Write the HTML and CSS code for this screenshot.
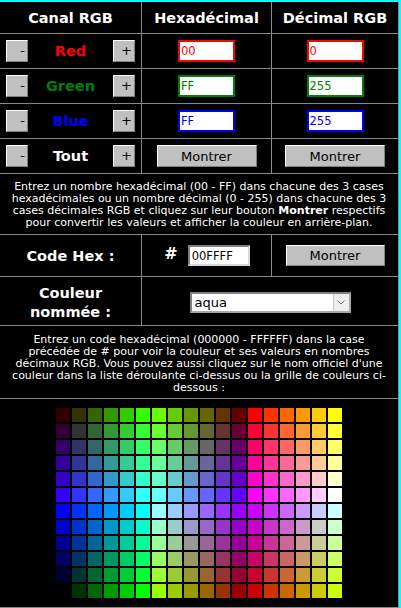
FILE: index.html
```html
<!DOCTYPE html>
<html lang="fr">
<head>
<meta charset="utf-8">
<title>Canal RGB</title>
<link rel="stylesheet" href="styles.css">
</head>
<body>
<div class="page">
  <div class="row head">
    <div class="cell sep">Canal RGB</div>
    <div class="cell sep">Hexadécimal</div>
    <div class="cell">Décimal RGB</div>
  </div>

  <div class="row chan">
    <div class="cell sep ctrl"><button class="step">-</button><span class="lbl red">Red</span><button class="step">+</button></div>
    <div class="cell sep"><input class="box red-b" type="text" value="00"></div>
    <div class="cell"><input class="box red-b" type="text" value="0"></div>
  </div>

  <div class="row chan">
    <div class="cell sep ctrl"><button class="step">-</button><span class="lbl green">Green</span><button class="step">+</button></div>
    <div class="cell sep"><input class="box green-b" type="text" value="FF"></div>
    <div class="cell"><input class="box green-b" type="text" value="255"></div>
  </div>

  <div class="row chan">
    <div class="cell sep ctrl"><button class="step">-</button><span class="lbl blue">Blue</span><button class="step">+</button></div>
    <div class="cell sep"><input class="box blue-b" type="text" value="FF"></div>
    <div class="cell"><input class="box blue-b" type="text" value="255"></div>
  </div>

  <div class="row chan">
    <div class="cell sep ctrl"><button class="step">-</button><span class="lbl">Tout</span><button class="step">+</button></div>
    <div class="cell sep"><button class="show">Montrer</button></div>
    <div class="cell"><button class="show">Montrer</button></div>
  </div>

  <div class="row note note1">
    <p>Entrez un nombre hexadécimal (00 - FF) dans chacune des 3 cases<br>hexadécimales ou un nombre décimal (0 - 255) dans chacune des 3<br>cases décimales RGB et cliquez sur leur bouton <b>Montrer</b> respectifs<br>pour convertir les valeurs et afficher la couleur en arrière-plan.</p>
  </div>

  <div class="row hexrow">
    <div class="cell sep lbl">Code Hex :</div>
    <div class="cell sep hexin"><span class="hash">#</span><input class="code" type="text" value="00FFFF"></div>
    <div class="cell"><button class="show show2">Montrer</button></div>
  </div>

  <div class="row named">
    <div class="cell sep lbl two">Couleur<br>nommée :</div>
    <div class="cell span2">
      <div class="selectbox">
        <select class="sel"><option>aqua</option></select>
        <span class="arrow"><svg width="8" height="5" viewBox="0 0 8 5"><path d="M0.5 0.5 L4 4 L7.5 0.5" fill="none" stroke="#6d6d6d" stroke-width="1"/></svg></span>
      </div>
    </div>
  </div>

  <div class="row note note2">
    <p>Entrez un code hexadécimal (000000 - FFFFFF) dans la case<br>précédée de # pour voir la couleur et ses valeurs en nombres<br>décimaux RGB. Vous pouvez aussi cliquez sur le nom officiel d'une<br>couleur dans la liste déroulante ci-dessus ou la grille de couleurs ci-<br>dessous :</p>
  </div>

  <div class="palette">
    <div class="grid">
<i style="background:#330000"></i><i style="background:#333300"></i><i style="background:#336600"></i><i style="background:#339900"></i><i style="background:#33CC00"></i><i style="background:#33FF00"></i><i style="background:#66FF00"></i><i style="background:#66CC00"></i><i style="background:#669900"></i><i style="background:#666600"></i><i style="background:#663300"></i><i style="background:#660000"></i><i style="background:#FF0000"></i><i style="background:#FF3300"></i><i style="background:#FF6600"></i><i style="background:#FF9900"></i><i style="background:#FFCC00"></i><i style="background:#FFFF00"></i>
<i style="background:#330033"></i><i style="background:#333333"></i><i style="background:#336633"></i><i style="background:#339933"></i><i style="background:#33CC33"></i><i style="background:#33FF33"></i><i style="background:#66FF33"></i><i style="background:#66CC33"></i><i style="background:#669933"></i><i style="background:#666633"></i><i style="background:#663333"></i><i style="background:#660033"></i><i style="background:#FF0033"></i><i style="background:#FF3333"></i><i style="background:#FF6633"></i><i style="background:#FF9933"></i><i style="background:#FFCC33"></i><i style="background:#FFFF33"></i>
<i style="background:#330066"></i><i style="background:#333366"></i><i style="background:#336666"></i><i style="background:#339966"></i><i style="background:#33CC66"></i><i style="background:#33FF66"></i><i style="background:#66FF66"></i><i style="background:#66CC66"></i><i style="background:#669966"></i><i style="background:#666666"></i><i style="background:#663366"></i><i style="background:#660066"></i><i style="background:#FF0066"></i><i style="background:#FF3366"></i><i style="background:#FF6666"></i><i style="background:#FF9966"></i><i style="background:#FFCC66"></i><i style="background:#FFFF66"></i>
<i style="background:#330099"></i><i style="background:#333399"></i><i style="background:#336699"></i><i style="background:#339999"></i><i style="background:#33CC99"></i><i style="background:#33FF99"></i><i style="background:#66FF99"></i><i style="background:#66CC99"></i><i style="background:#669999"></i><i style="background:#666699"></i><i style="background:#663399"></i><i style="background:#660099"></i><i style="background:#FF0099"></i><i style="background:#FF3399"></i><i style="background:#FF6699"></i><i style="background:#FF9999"></i><i style="background:#FFCC99"></i><i style="background:#FFFF99"></i>
<i style="background:#3300CC"></i><i style="background:#3333CC"></i><i style="background:#3366CC"></i><i style="background:#3399CC"></i><i style="background:#33CCCC"></i><i style="background:#33FFCC"></i><i style="background:#66FFCC"></i><i style="background:#66CCCC"></i><i style="background:#6699CC"></i><i style="background:#6666CC"></i><i style="background:#6633CC"></i><i style="background:#6600CC"></i><i style="background:#FF00CC"></i><i style="background:#FF33CC"></i><i style="background:#FF66CC"></i><i style="background:#FF99CC"></i><i style="background:#FFCCCC"></i><i style="background:#FFFFCC"></i>
<i style="background:#3300FF"></i><i style="background:#3333FF"></i><i style="background:#3366FF"></i><i style="background:#3399FF"></i><i style="background:#33CCFF"></i><i style="background:#33FFFF"></i><i style="background:#66FFFF"></i><i style="background:#66CCFF"></i><i style="background:#6699FF"></i><i style="background:#6666FF"></i><i style="background:#6633FF"></i><i style="background:#6600FF"></i><i style="background:#FF00FF"></i><i style="background:#FF33FF"></i><i style="background:#FF66FF"></i><i style="background:#FF99FF"></i><i style="background:#FFCCFF"></i><i style="background:#FFFFFF"></i>
<i style="background:#0000FF"></i><i style="background:#0033FF"></i><i style="background:#0066FF"></i><i style="background:#0099FF"></i><i style="background:#00CCFF"></i><i style="background:#00FFFF"></i><i style="background:#99FFFF"></i><i style="background:#99CCFF"></i><i style="background:#9999FF"></i><i style="background:#9966FF"></i><i style="background:#9933FF"></i><i style="background:#9900FF"></i><i style="background:#CC00FF"></i><i style="background:#CC33FF"></i><i style="background:#CC66FF"></i><i style="background:#CC99FF"></i><i style="background:#CCCCFF"></i><i style="background:#CCFFFF"></i>
<i style="background:#0000CC"></i><i style="background:#0033CC"></i><i style="background:#0066CC"></i><i style="background:#0099CC"></i><i style="background:#00CCCC"></i><i style="background:#00FFCC"></i><i style="background:#99FFCC"></i><i style="background:#99CCCC"></i><i style="background:#9999CC"></i><i style="background:#9966CC"></i><i style="background:#9933CC"></i><i style="background:#9900CC"></i><i style="background:#CC00CC"></i><i style="background:#CC33CC"></i><i style="background:#CC66CC"></i><i style="background:#CC99CC"></i><i style="background:#CCCCCC"></i><i style="background:#CCFFCC"></i>
<i style="background:#000099"></i><i style="background:#003399"></i><i style="background:#006699"></i><i style="background:#009999"></i><i style="background:#00CC99"></i><i style="background:#00FF99"></i><i style="background:#99FF99"></i><i style="background:#99CC99"></i><i style="background:#999999"></i><i style="background:#996699"></i><i style="background:#993399"></i><i style="background:#990099"></i><i style="background:#CC0099"></i><i style="background:#CC3399"></i><i style="background:#CC6699"></i><i style="background:#CC9999"></i><i style="background:#CCCC99"></i><i style="background:#CCFF99"></i>
<i style="background:#000066"></i><i style="background:#003366"></i><i style="background:#006666"></i><i style="background:#009966"></i><i style="background:#00CC66"></i><i style="background:#00FF66"></i><i style="background:#99FF66"></i><i style="background:#99CC66"></i><i style="background:#999966"></i><i style="background:#996666"></i><i style="background:#993366"></i><i style="background:#990066"></i><i style="background:#CC0066"></i><i style="background:#CC3366"></i><i style="background:#CC6666"></i><i style="background:#CC9966"></i><i style="background:#CCCC66"></i><i style="background:#CCFF66"></i>
<i style="background:#000033"></i><i style="background:#003333"></i><i style="background:#006633"></i><i style="background:#009933"></i><i style="background:#00CC33"></i><i style="background:#00FF33"></i><i style="background:#99FF33"></i><i style="background:#99CC33"></i><i style="background:#999933"></i><i style="background:#996633"></i><i style="background:#993333"></i><i style="background:#990033"></i><i style="background:#CC0033"></i><i style="background:#CC3333"></i><i style="background:#CC6633"></i><i style="background:#CC9933"></i><i style="background:#CCCC33"></i><i style="background:#CCFF33"></i>
<i style="background:#000000"></i><i style="background:#003300"></i><i style="background:#006600"></i><i style="background:#009900"></i><i style="background:#00CC00"></i><i style="background:#00FF00"></i><i style="background:#99FF00"></i><i style="background:#99CC00"></i><i style="background:#999900"></i><i style="background:#996600"></i><i style="background:#993300"></i><i style="background:#990000"></i><i style="background:#CC0000"></i><i style="background:#CC3300"></i><i style="background:#CC6600"></i><i style="background:#CC9900"></i><i style="background:#CCCC00"></i><i style="background:#CCFF00"></i>
    </div>
  </div>
</div>
</body>
</html>
```
FILE: styles.css
```css
* { box-sizing: border-box; }

html, body {
  margin: 0;
  padding: 0;
}

body {
  background: #00ffff;
  font-family: "DejaVu Sans", Verdana, sans-serif;
  color: #fff;
}

.page {
  margin-top: 2px;
  width: 399px;
  background: #000;
  border-right: 1px solid #888;
  border-bottom: 1px solid #888;
}

.row {
  display: grid;
  grid-template-columns: 142px 130px 126px;
  border-bottom: 1px solid #888;
}

.cell {
  display: flex;
  align-items: center;
  justify-content: center;
}

.sep { border-right: 1px solid #888; }

.head {
  height: 32px;
  font-weight: bold;
  font-size: 14.5px;
}

.chan { height: 35px; }

.ctrl {
  justify-content: space-between;
  padding: 0 6px;
}

.lbl {
  font-weight: bold;
  font-size: 14.5px;
  color: #fff;
}

.red { color: #ff0000; }
.green { color: #008000; }
.blue { color: #0000ff; }

.step {
  width: 22px;
  height: 22px;
  padding: 0 2px 0 0;
  margin: 0;
  background: #c0c0c0;
  border: 1px solid;
  border-color: #ffffff #808080 #808080 #ffffff;
  font-family: "DejaVu Sans", Verdana, sans-serif;
  font-size: 13px;
  line-height: 20px;
  color: #000;
  text-align: right;
}

.box {
  width: 57px;
  height: 22px;
  padding: 0 0 0 1px;
  margin: 0;
  background: #fff;
  border: 2px solid;
  font-family: "DejaVu Sans", Verdana, sans-serif;
  font-size: 11.5px;
  outline: none;
}

.red-b { border-color: #ff0000; color: #ff0000; }
.green-b { border-color: #008000; color: #008000; }
.blue-b { border-color: #0000ff; color: #0000ff; }

.show {
  width: 100px;
  height: 22px;
  padding: 0;
  margin: 0;
  background: #c0c0c0;
  border: 1px solid;
  border-color: #ffffff #808080 #808080 #ffffff;
  font-family: "DejaVu Sans", Verdana, sans-serif;
  font-size: 13px;
  color: #000;
}

.show2 {
  width: 99px;
  height: 21px;
}

.note {
  display: block;
  text-align: center;
  font-size: 11px;
  line-height: 12px;
}

.note p {
  margin: 0;
  white-space: nowrap;
}

.note b { font-weight: bold; }

.note1 {
  height: 61px;
  padding-top: 7px;
}

.note2 {
  height: 73px;
  padding-top: 8px;
}

.hexrow { height: 42px; }

.hexin { gap: 10px; padding-left: 1px; }

.hash {
  font-weight: bold;
  font-size: 16px;
  line-height: 16px;
  margin-top: -3px;
}

.code {
  width: 62px;
  height: 21px;
  padding: 0 0 0 2px;
  margin: 0;
  background: #fff;
  border: 2px solid;
  border-color: #808080 #d8d8d8 #d8d8d8 #808080;
  font-family: "DejaVu Sans", Verdana, sans-serif;
  font-size: 11.5px;
  color: #000;
  outline: none;
}

.named { height: 49px; }

.two {
  text-align: center;
  line-height: 19px;
  padding-top: 3px;
}

.span2 {
  grid-column: 2 / 4;
  padding-top: 3px;
}

.selectbox {
  display: flex;
  width: 161px;
  height: 21px;
  background: #fff;
  border: 2px solid;
  border-color: #808080 #a8a8a8 #a8a8a8 #808080;
}

.sel {
  flex: 1;
  min-width: 0;
  appearance: none;
  -webkit-appearance: none;
  border: none;
  background: #fff;
  margin: 0;
  padding: 0 0 0 3px;
  font-family: "DejaVu Sans", Verdana, sans-serif;
  font-size: 13px;
  color: #000;
  outline: none;
}

.arrow {
  width: 16px;
  display: flex;
  align-items: center;
  justify-content: center;
  background: #eeeeee;
  border-left: 1px solid #c8c8c8;
}

.palette {
  height: 208px;
  padding-top: 9px;
  display: flex;
  justify-content: center;
  align-items: flex-start;
}

.grid {
  display: grid;
  grid-template-columns: repeat(18, 14px);
  grid-auto-rows: 14px;
  gap: 2px;
}

.grid i {
  display: block;
  width: 14px;
  height: 14px;
}
```
